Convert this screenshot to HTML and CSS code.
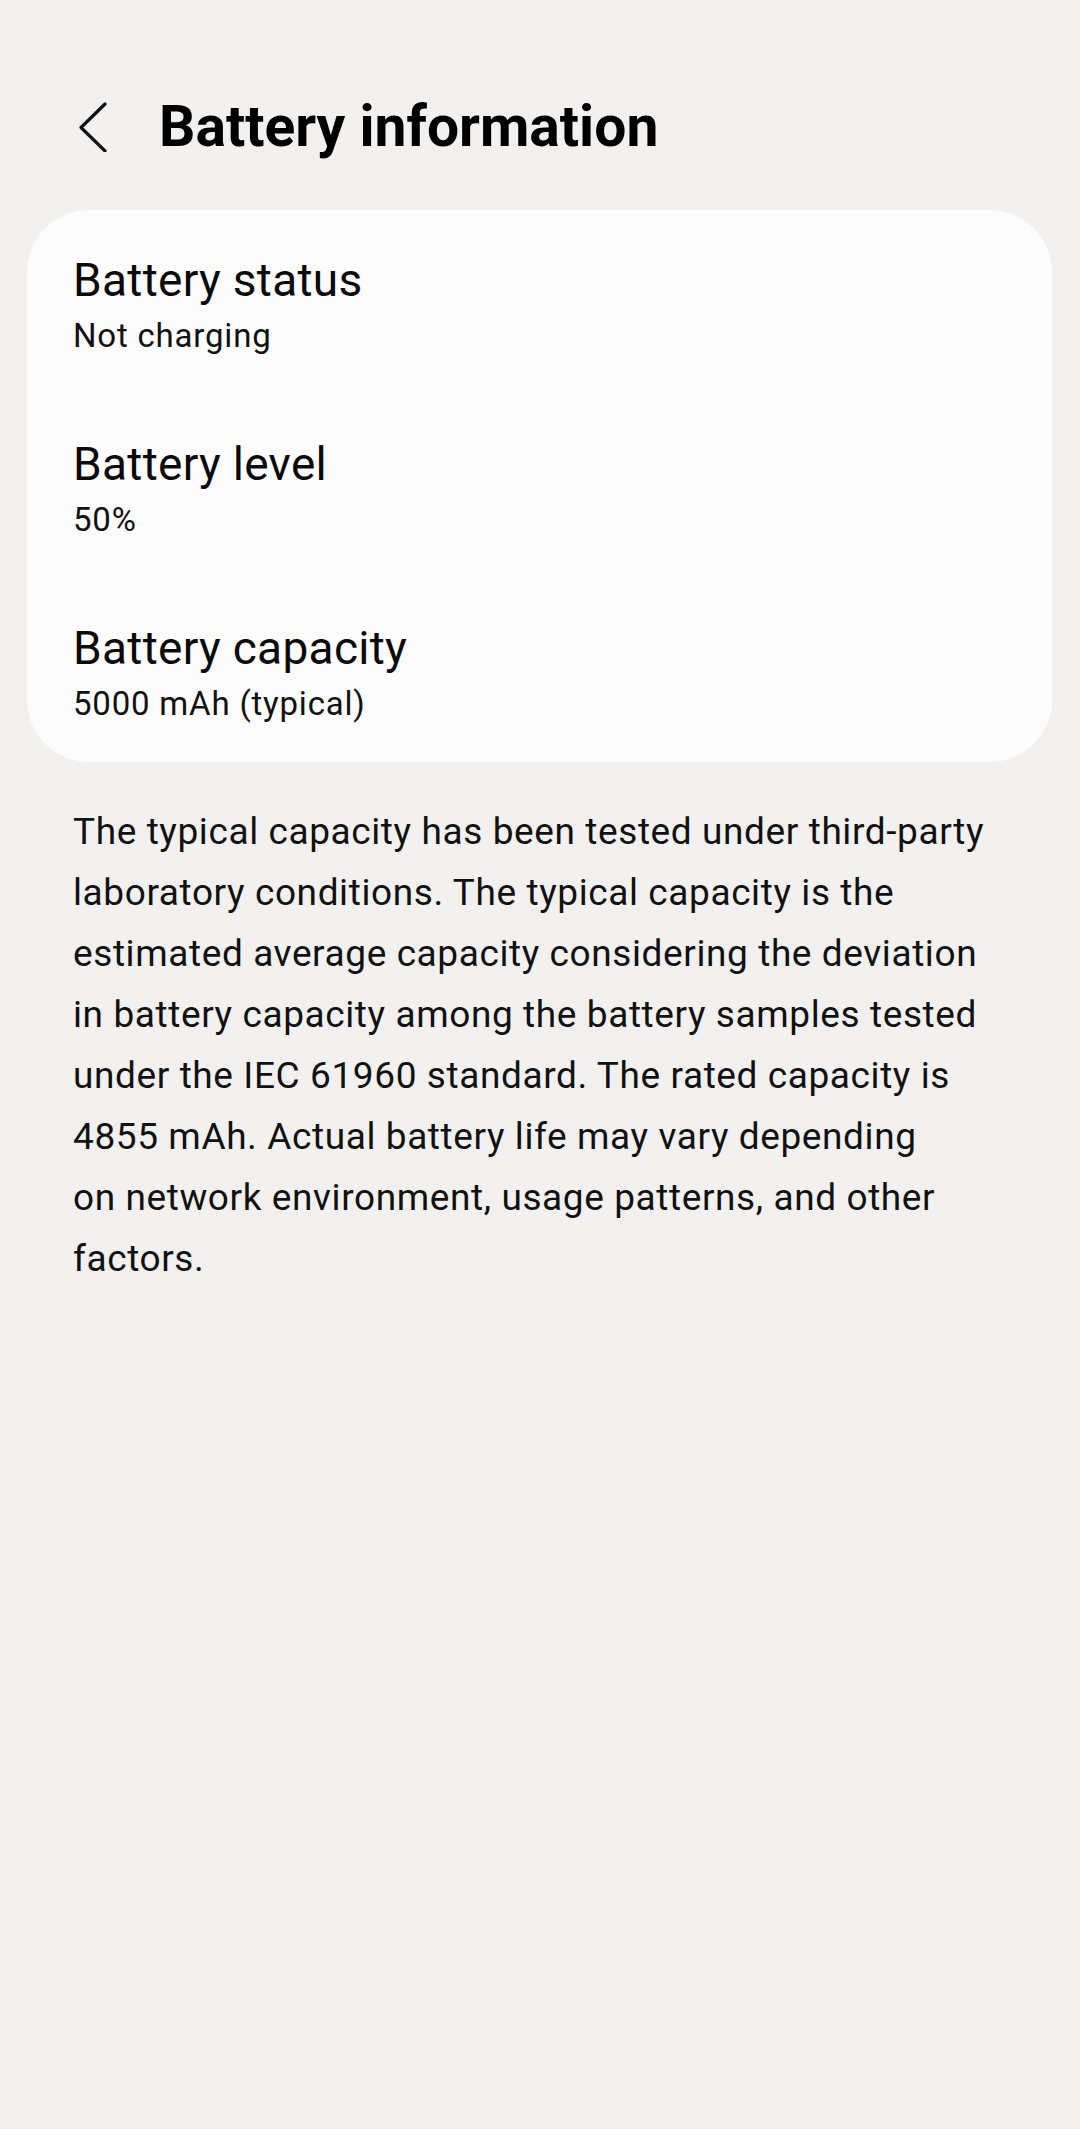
FILE: index.html
```html
<!DOCTYPE html>
<html lang="en">
<head>
<meta charset="utf-8">
<title>Battery information</title>
<link rel="stylesheet" href="styles.css">
</head>
<body>
<div class="screen">
  <header class="app-bar">
    <svg class="back" width="28" height="50" viewBox="0 0 28 50" aria-hidden="true">
      <polyline points="26,2 2,25.5 26,49" fill="none" stroke="#111" stroke-width="3.2" stroke-linecap="round" stroke-linejoin="round"/>
    </svg>
    <h1 class="title">Battery information</h1>
  </header>

  <section class="card">
    <div class="item">
      <div class="item-title">Battery status</div>
      <div class="item-sub">Not charging</div>
    </div>
    <div class="item">
      <div class="item-title">Battery level</div>
      <div class="item-sub">50%</div>
    </div>
    <div class="item">
      <div class="item-title">Battery capacity</div>
      <div class="item-sub">5000 mAh (typical)</div>
    </div>
  </section>

  <p class="note">The typical capacity has been tested under third-party<br>laboratory conditions. The typical capacity is the<br>estimated average capacity considering the deviation<br>in battery capacity among the battery samples tested<br>under the IEC 61960 standard. The rated capacity is<br>4855 mAh. Actual battery life may vary depending<br>on network environment, usage patterns, and other<br>factors.</p>
</div>
</body>
</html>
```

FILE: styles.css
```css
html, body {
  margin: 0;
  padding: 0;
  background: #f2f1ef;
}
body {
  font-family: Roboto, "Liberation Sans", sans-serif;
  color: #0a0a0a;
  width: 1080px;
  min-height: 2129px;
}
.screen {
  display: flex;
  flex-direction: column;
}
.app-bar {
  display: flex;
  align-items: center;
  height: 140px;
  margin-top: 57px;
  padding-left: 79px;
  gap: 52px;
}
.back {
  flex: none;
  display: block;
}
.title {
  margin: 0;
  font-size: 57px;
  font-weight: 700;
  line-height: 70px;
  letter-spacing: 0;
  color: #000;
}
.card {
  margin: 13px 28px 0 27px;
  background: #fcfcfc;
  border-radius: 62px;
  padding: 0 46px;
  display: flex;
  flex-direction: column;
}
.item {
  padding: 42px 0 37px;
}
.item-title {
  font-size: 46px;
  line-height: 56px;
  letter-spacing: 0.3px;
  color: #0a0a0a;
}
.item-sub {
  margin-top: 7px;
  font-size: 33px;
  line-height: 42px;
  letter-spacing: 0.8px;
  color: #111;
}
.note {
  margin: 39px 0 0;
  padding: 0 20px 0 73px;
  font-size: 37px;
  line-height: 61px;
  letter-spacing: 0.6px;
  color: #111;
}
```
